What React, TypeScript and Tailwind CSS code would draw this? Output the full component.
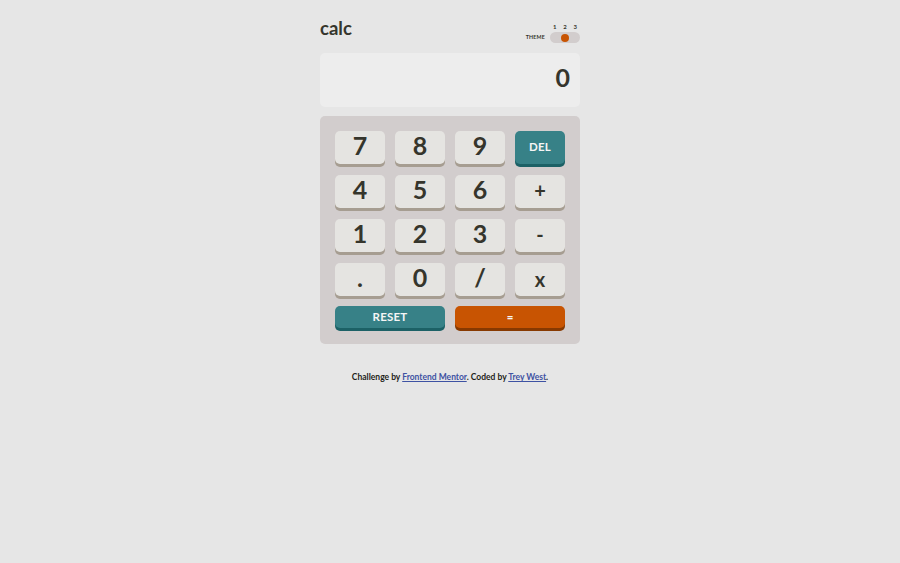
import React from 'react';

const FONT = "font-['Lato','Liberation_Sans',sans-serif]";

const keys = ['7', '8', '9', 'DEL', '4', '5', '6', '+', '1', '2', '3', '-', '.', '0', '/', 'x'];

const Key: React.FC<{ label: string }> = ({ label }) => {
  if (label === 'DEL') {
    return (
      <button className="h-[33px] flex items-center justify-center rounded-[5px] bg-[#378187] shadow-[0_3px_0_#1c6166] pb-[2px] text-[11.5px] tracking-[0.2px] font-bold text-[#f5f5f5]">
        DEL
      </button>
    );
  }
  const small = label === '+' || label === '-' || label === 'x';
  return (
    <button
      className={`h-[33px] flex items-center justify-center rounded-[5px] bg-[#e5e4e1] shadow-[0_3px_0_#a69d91] font-bold text-[#35352c] ${small ? 'text-[20px]' : 'text-[25px]'} ${label === 'x' ? 'pb-[2px]' : 'pb-[3px]'}`}
    >
      {label}
    </button>
  );
};

export default function App() {
  return (
    <div className={`min-h-[563px] bg-[#e6e6e6] flex flex-col items-center pt-[20px] ${FONT}`}>
      <div className="w-[260px]">
        <header className="flex justify-between items-end h-[23px]">
          <h1 className="text-[18.5px] leading-[16px] self-start font-bold text-[#35352c]">calc</h1>
          <div className="flex items-end gap-[5px]">
            <span className="text-[5.3px] leading-[11px] font-bold tracking-[0.2px] text-[#35352c]">THEME</span>
            <div className="w-[30px]">
              <div className="flex justify-between px-[3px] text-[6px] leading-[6px] font-bold text-[#35352c] mb-[2px]">
                <span>1</span>
                <span>2</span>
                <span>3</span>
              </div>
              <div className="h-[11px] rounded-full bg-[#d2cdcd] flex items-center justify-center">
                <div className="w-2 h-2 rounded-full bg-[#c85402]" />
              </div>
            </div>
          </div>
        </header>

        <div className="mt-[10px] h-[54px] rounded-[5px] bg-[#ededed] flex items-center justify-end px-[10px] pb-[5px] text-[25px] font-bold text-[#35352c]">
          0
        </div>

        <div className="mt-[9px] rounded-[5px] bg-[#d2cdcd] px-[15px] pt-[15px] pb-[16px]">
          <div className="grid grid-cols-4 gap-x-[10px] gap-y-[11px] mb-[10px]">
            {keys.map(k => (
              <Key key={k} label={k} />
            ))}
          </div>
          <div className="grid grid-cols-2 gap-x-[10px]">
            <button className="h-[22px] flex items-center justify-center rounded-[5px] bg-[#378187] shadow-[0_3px_0_#1c6166] text-[11.5px] tracking-[0.2px] font-bold text-[#f5f5f5]">
              RESET
            </button>
            <button className="h-[22px] flex items-center justify-center rounded-[5px] bg-[#c85402] shadow-[0_3px_0_#873901] text-[11.5px] font-bold text-[#f5f5f5]">
              =
            </button>
          </div>
        </div>

        <p className="mt-[28px] text-center text-[8.5px] leading-[11px] font-bold text-[#1f1f1a]">
          Challenge by <a className="text-[#3e52a3] underline">Frontend Mentor</a>. Coded by{' '}
          <a className="text-[#3e52a3] underline">Trey West</a>.
        </p>
      </div>
    </div>
  );
}
